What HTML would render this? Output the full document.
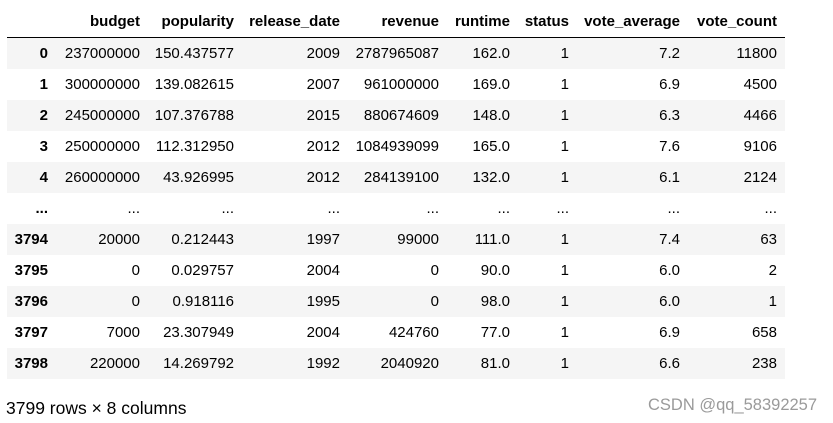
<!DOCTYPE html>
<html><head><meta charset="utf-8"><style>
html,body{margin:0;padding:0;background:#fff;width:833px;height:423px;overflow:hidden;font-family:"Liberation Sans",Arial,sans-serif;color:#000}
table{position:absolute;left:7px;top:7px;border-collapse:collapse;table-layout:fixed;font-size:15px}
td,th{padding:0 8px 0 0;text-align:right;height:31px;line-height:31px;white-space:nowrap}
thead th{height:30px;line-height:30px;border-bottom:1px solid #000;font-weight:bold}
tbody th{font-weight:bold}
tbody tr:nth-child(odd){background:#f5f5f5}
.foot{position:absolute;left:6px;top:398px;font-size:17.5px;line-height:20px}
.wm{position:absolute;left:648px;top:395px;font-size:16.5px;line-height:20px;color:#9a9a9a}
</style></head><body>
<table>
<colgroup><col style="width:49px"><col style="width:92px"><col style="width:94px"><col style="width:106px"><col style="width:99px"><col style="width:71px"><col style="width:59px"><col style="width:111px"><col style="width:97px"></colgroup>
<thead><tr><th></th><th>budget</th><th>popularity</th><th>release_date</th><th>revenue</th><th>runtime</th><th>status</th><th>vote_average</th><th>vote_count</th></tr></thead>
<tbody>
<tr><th>0</th><td>237000000</td><td>150.437577</td><td>2009</td><td>2787965087</td><td>162.0</td><td>1</td><td>7.2</td><td>11800</td></tr>
<tr><th>1</th><td>300000000</td><td>139.082615</td><td>2007</td><td>961000000</td><td>169.0</td><td>1</td><td>6.9</td><td>4500</td></tr>
<tr><th>2</th><td>245000000</td><td>107.376788</td><td>2015</td><td>880674609</td><td>148.0</td><td>1</td><td>6.3</td><td>4466</td></tr>
<tr><th>3</th><td>250000000</td><td>112.312950</td><td>2012</td><td>1084939099</td><td>165.0</td><td>1</td><td>7.6</td><td>9106</td></tr>
<tr><th>4</th><td>260000000</td><td>43.926995</td><td>2012</td><td>284139100</td><td>132.0</td><td>1</td><td>6.1</td><td>2124</td></tr>
<tr><th>...</th><td>...</td><td>...</td><td>...</td><td>...</td><td>...</td><td>...</td><td>...</td><td>...</td></tr>
<tr><th>3794</th><td>20000</td><td>0.212443</td><td>1997</td><td>99000</td><td>111.0</td><td>1</td><td>7.4</td><td>63</td></tr>
<tr><th>3795</th><td>0</td><td>0.029757</td><td>2004</td><td>0</td><td>90.0</td><td>1</td><td>6.0</td><td>2</td></tr>
<tr><th>3796</th><td>0</td><td>0.918116</td><td>1995</td><td>0</td><td>98.0</td><td>1</td><td>6.0</td><td>1</td></tr>
<tr><th>3797</th><td>7000</td><td>23.307949</td><td>2004</td><td>424760</td><td>77.0</td><td>1</td><td>6.9</td><td>658</td></tr>
<tr><th>3798</th><td>220000</td><td>14.269792</td><td>1992</td><td>2040920</td><td>81.0</td><td>1</td><td>6.6</td><td>238</td></tr>
</tbody></table>
<div class="foot">3799 rows × 8 columns</div>
<div class="wm">CSDN @qq_58392257</div>
</body></html>
